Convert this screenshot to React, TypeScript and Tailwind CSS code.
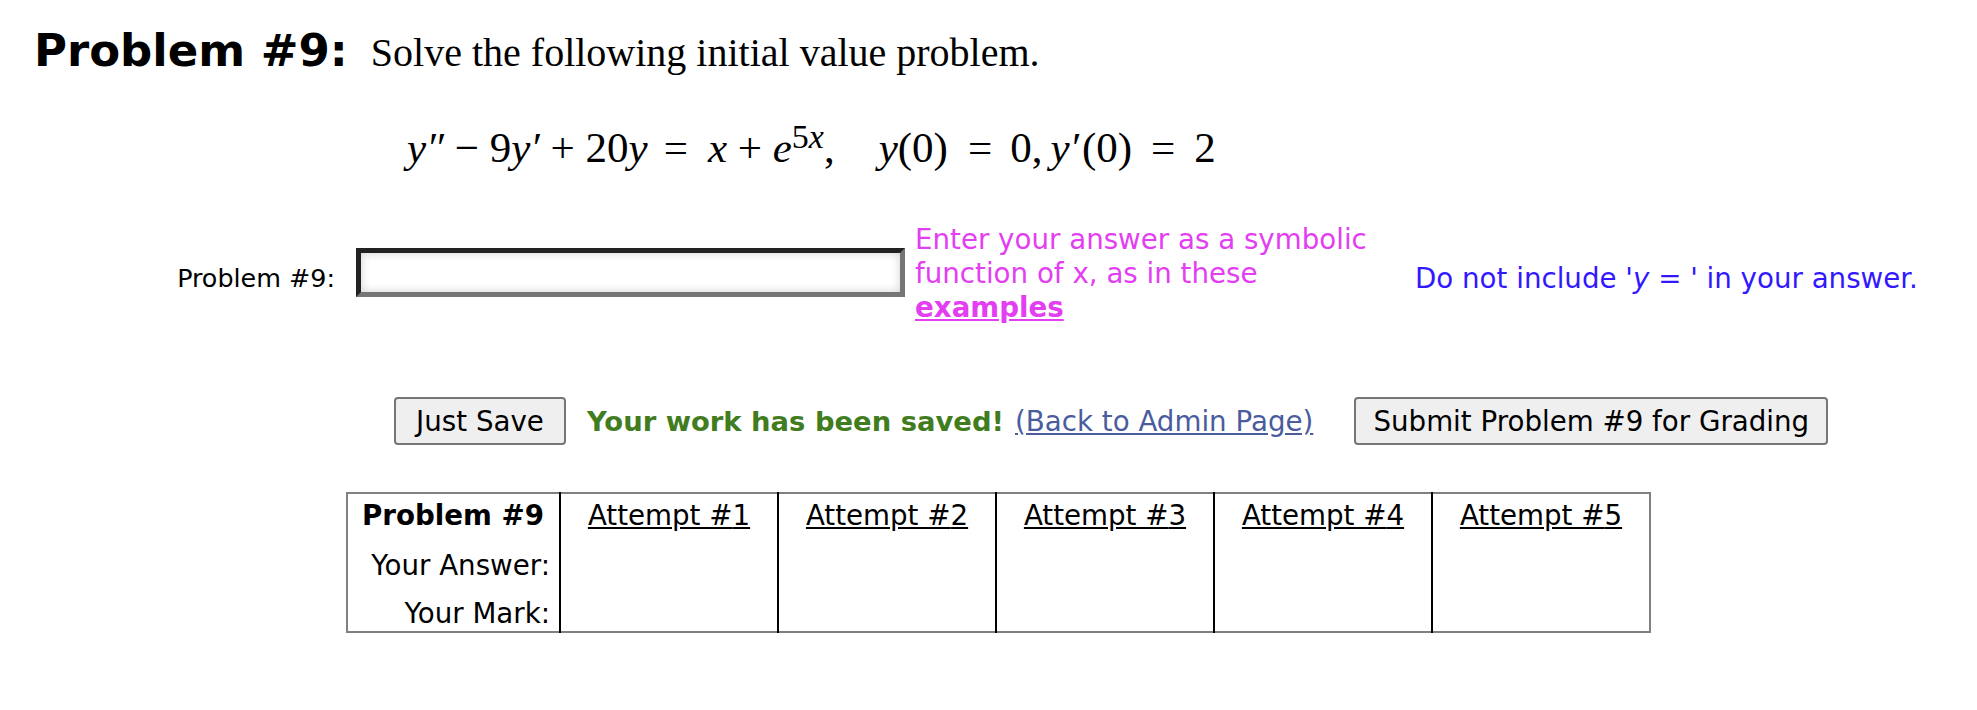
export default function App() {
  return (
    <div className="w-[1977px] h-[710px] bg-white font-['DejaVu_Sans',sans-serif] text-black overflow-hidden">
      {/* heading */}
      <div className="flex items-baseline pl-[34px] pt-[22px]">
        <h1 className="text-[45px] leading-[58px] font-bold">Problem #9:</h1>
        <span className="ml-[23px] font-['Liberation_Serif',serif] text-[40px] leading-[58px]">Solve the following initial value problem.</span>
      </div>
      {/* equation */}
      <div className="pl-[407px] mt-[36px] h-[60px] font-['Liberation_Serif',serif] text-[43px] leading-[60px] whitespace-pre">
        <i>y″</i> − 9<i>y′</i> + 20<i>y</i>
        <span className="ml-[16px] mr-[20px]">=</span>
        <i>x</i> + <i>e</i>
        <sup className="text-[34px] top-0 align-[14px] leading-none">5<i>x</i></sup>
        <span className="mr-[44px]">,</span>
        <i>y</i>(0)
        <span className="ml-[20px] mr-[18px]">=</span>
        0,
        <i className="ml-[8px] mr-[3px]">y′</i>(0)
        <span className="mx-[19px]">=</span>
        2
      </div>
      {/* answer row */}
      <div className="flex items-center mt-[45px] text-[27.7px]">
        <div className="w-[335px] mt-[8px] text-right text-[25.4px]">Problem #9:</div>
        <input type="text" className="ml-[21px] mb-[4px] w-[549px] h-[49px] border-[5px] border-t-[#222] border-l-[#222] border-r-[#767676] border-b-[#767676] shadow-[inset_0_0_10px_rgba(0,0,0,0.18)]" />
        <div className="ml-[10px] w-[470px] text-[#e33ef2] leading-[34px]">
          Enter your answer as a symbolic function of x, as in these <a className="font-bold underline" href="#">examples</a>
        </div>
        <div className="ml-[30px] mt-[10px] text-[#3318ff] whitespace-nowrap">Do not include '<i>y</i> = ' in your answer.</div>
      </div>
      {/* buttons */}
      <div className="flex items-center pl-[394px] mt-[72px] text-[27.7px]">
        <button className="w-[172px] h-[48px] pt-[2px] bg-[#efefef] border-2 border-[#767676] rounded-[4px]">Just Save</button>
        <b className="ml-[21px] pt-[2px] text-[27.4px] text-[#417d1e]">Your work has been saved!</b>
        <a className="ml-[11px] pt-[2px] text-[#4a5c9e] underline" href="#">(Back to Admin Page)</a>
        <button className="ml-[41px] w-[474px] h-[48px] pt-[2px] bg-[#efefef] border-2 border-[#767676] rounded-[4px]">Submit Problem #9 for Grading</button>
      </div>
      {/* attempts table */}
      <table className="ml-[346px] mt-[47px] border-2 border-[#808080] border-collapse text-[27.7px] leading-[32px]">
        <tbody>
          <tr>
            <td className="w-[213px] h-[42px] pt-[2px] text-right pr-[15px] font-bold">Problem #9</td>
            {[1, 2, 3, 4, 5].map((n) => (
              <td key={n} rowSpan={3} className="w-[218px] align-top text-center border-l-2 border-black pt-[6px]"><a className="underline" href="#">Attempt #{n}</a></td>
            ))}
          </tr>
          <tr><td className="text-right pr-[9px] pt-[5px] h-[56px]">Your Answer:</td></tr>
          <tr><td className="text-right pr-[9px] pt-[6px] h-[41px]">Your Mark:</td></tr>
        </tbody>
      </table>
    </div>
  );
}
